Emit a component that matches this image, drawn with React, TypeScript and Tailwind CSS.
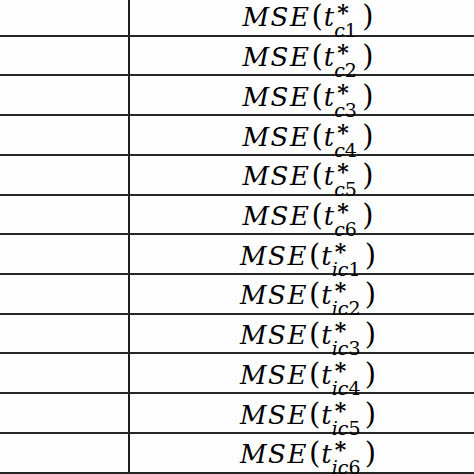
const rows = ['c1', 'c2', 'c3', 'c4', 'c5', 'c6', 'ic1', 'ic2', 'ic3', 'ic4', 'ic5', 'ic6'];

function Mse({ sub }: { sub: string }) {
  const letters = sub.slice(0, -1);
  const digit = sub.slice(-1);
  return (
    <span className="inline-flex items-baseline text-black font-['DejaVu_Serif',serif] text-[26px] leading-none">
      <span className="italic tracking-[1.5px]">MSE</span>
      <span className="ml-[1px] text-[29px]">(</span>
      <span className="italic ml-[1px]">t</span>
      <span className={`relative inline-block h-0 ${letters.length > 1 ? 'w-[33px]' : 'w-[28px]'}`}>
        <span className="absolute left-[3px] top-[-25px] text-[22px] leading-none font-bold">*</span>
        <span className="absolute left-0 top-[-5px] text-[19px] leading-none whitespace-nowrap">
          <span className="italic">{letters}</span>
          {digit}
        </span>
      </span>
      <span className="text-[29px]">)</span>
    </span>
  );
}

export default function App() {
  return (
    <div className="w-[474px] h-[474px] overflow-hidden bg-[#fefefe]">
      <div className="mt-[-3px]">
        {rows.map((r) => (
          <div key={r} className="flex h-[39.73px] border-b-2 border-[#262626]">
            <div className="w-[130px] shrink-0 border-r-2 border-[#1e1e1e]" />
            <div className="flex-1 flex items-center justify-center pl-[12px] pt-[2px]">
              <Mse sub={r} />
            </div>
          </div>
        ))}
      </div>
    </div>
  );
}
